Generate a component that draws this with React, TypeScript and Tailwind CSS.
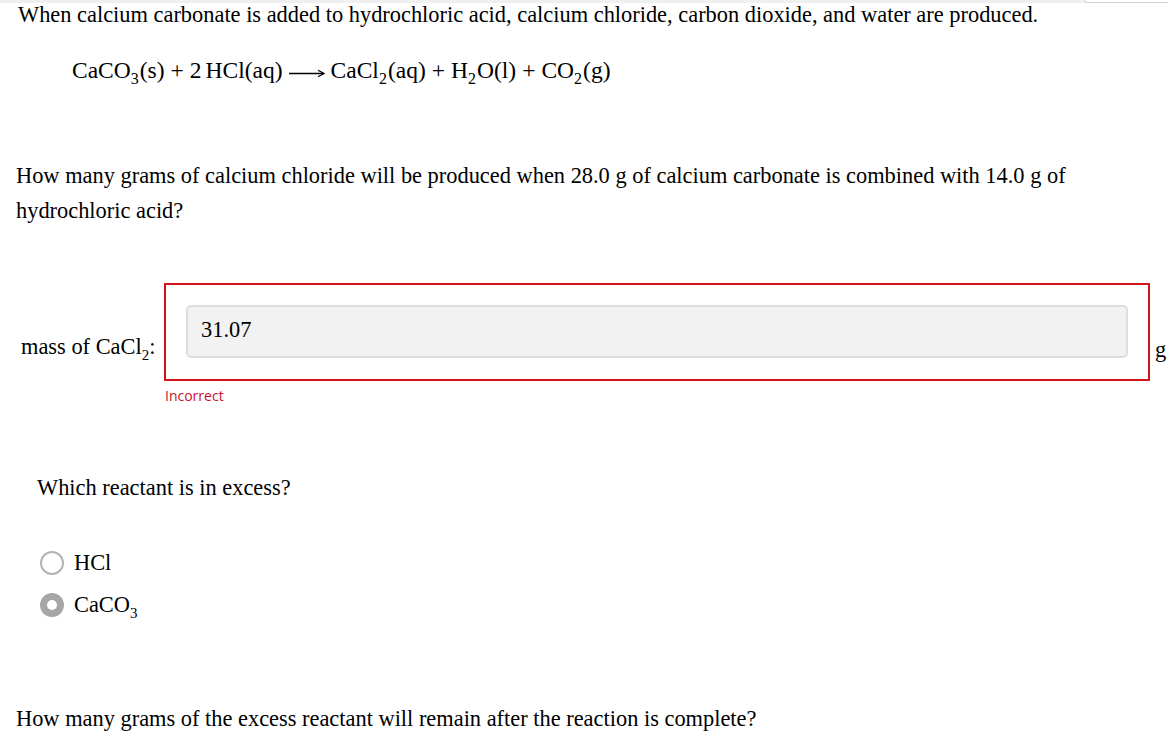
import React from 'react';

const serif = { fontFamily: '"Liberation Serif", "Times New Roman", serif' };

const Sub = ({ children }: { children: React.ReactNode }) => (
  <span className="relative top-[6px] text-[15px] leading-none">{children}</span>
);

const MSub = ({ children }: { children: React.ReactNode }) => (
  <span className="relative top-[6px] mr-[1px] text-[16px] leading-none">{children}</span>
);

const Plus = () => <span className="mx-[6px]">+</span>;

const Arrow = () => (
  <svg className="mx-[6px] inline-block align-middle" width="36" height="10" viewBox="0 0 36 10">
    <path d="M0 5.5H34" stroke="#000" strokeWidth="1.3" />
    <path d="M29 2.2L35 5.5L29 8.8" fill="none" stroke="#000" strokeWidth="1.2" />
  </svg>
);

const Radio = ({ checked }: { checked?: boolean }) =>
  checked ? (
    <span className="inline-flex h-[24px] w-[24px] items-center justify-center rounded-full bg-[#a6a6a6]">
      <span className="h-[10px] w-[10px] rounded-full bg-white" />
    </span>
  ) : (
    <span className="inline-block h-[24px] w-[24px] rounded-full border-2 border-[#b3b3b3] bg-white" />
  );

const App = () => {
  return (
    <div className="relative h-[747px] w-[1168px] overflow-hidden bg-white text-[22.4px] text-black" style={serif}>
      {/* top strip */}
      <div className="flex h-[3px]">
        <div className="h-[3px] flex-1 bg-[#f0f0f0]" />
        <div className="h-[3px] w-[84px] rounded-bl-[4px] border-b border-l border-[#cfcfcf]" />
      </div>

      <p className="ml-[18px] mt-[-1px] leading-[26px]">
        When calcium carbonate is added to hydrochloric acid, calcium chloride, carbon dioxide, and water are produced.
      </p>

      <div className="ml-[72px] mt-[29px] whitespace-nowrap text-[23.5px] leading-[26px]">
        CaCO<MSub>3</MSub>(s)<Plus />2<span className="ml-[4px]">HCl(aq)</span><Arrow />CaCl<MSub>2</MSub>(aq)
        <Plus />H<MSub>2</MSub>O(l)<Plus />CO<MSub>2</MSub>(g)
      </div>

      <p className="ml-[16px] mt-[75px] w-[1140px] leading-[35px]">
        How many grams of calcium chloride will be produced when 28.0 g of calcium carbonate is combined with 14.0 g of
        hydrochloric acid?
      </p>

      <div className="mt-[55px] flex items-start">
        <div className="ml-[21px] mt-[51px] w-[143px] leading-[26px]">
          mass of CaCl<Sub>2</Sub>:
        </div>
        <div className="h-[98px] w-[986px] border-2 border-[#d0121b] px-[20px] pt-[20px]">
          <div className="flex h-[53px] items-center rounded-[5px] border-2 border-[#dedede] bg-[#f2f2f2] px-[13px] pb-[3px]">
            31.07
          </div>
        </div>
        <div className="ml-[5px] mt-[54px] leading-[26px]">g</div>
      </div>
      <div
        className="ml-[165px] mt-[6px] text-[14px] leading-[18px] text-[#c8102e]"
        style={{ fontFamily: '"Open Sans", "Noto Sans", sans-serif' }}
      >
        Incorrect
      </div>

      <p className="ml-[37px] mt-[70px] leading-[26px]">Which reactant is in excess?</p>

      <div className="ml-[40px] mt-[50px] flex flex-col gap-[18px]">
        <label className="flex items-center gap-[10px] leading-[24px]">
          <Radio />
          <span>HCl</span>
        </label>
        <label className="flex items-center gap-[10px] leading-[24px]">
          <Radio checked />
          <span>
            CaCO<Sub>3</Sub>
          </span>
        </label>
      </div>

      <p className="ml-[16px] mt-[89px] leading-[26px]">
        How many grams of the excess reactant will remain after the reaction is complete?
      </p>
    </div>
  );
};

export default App;
